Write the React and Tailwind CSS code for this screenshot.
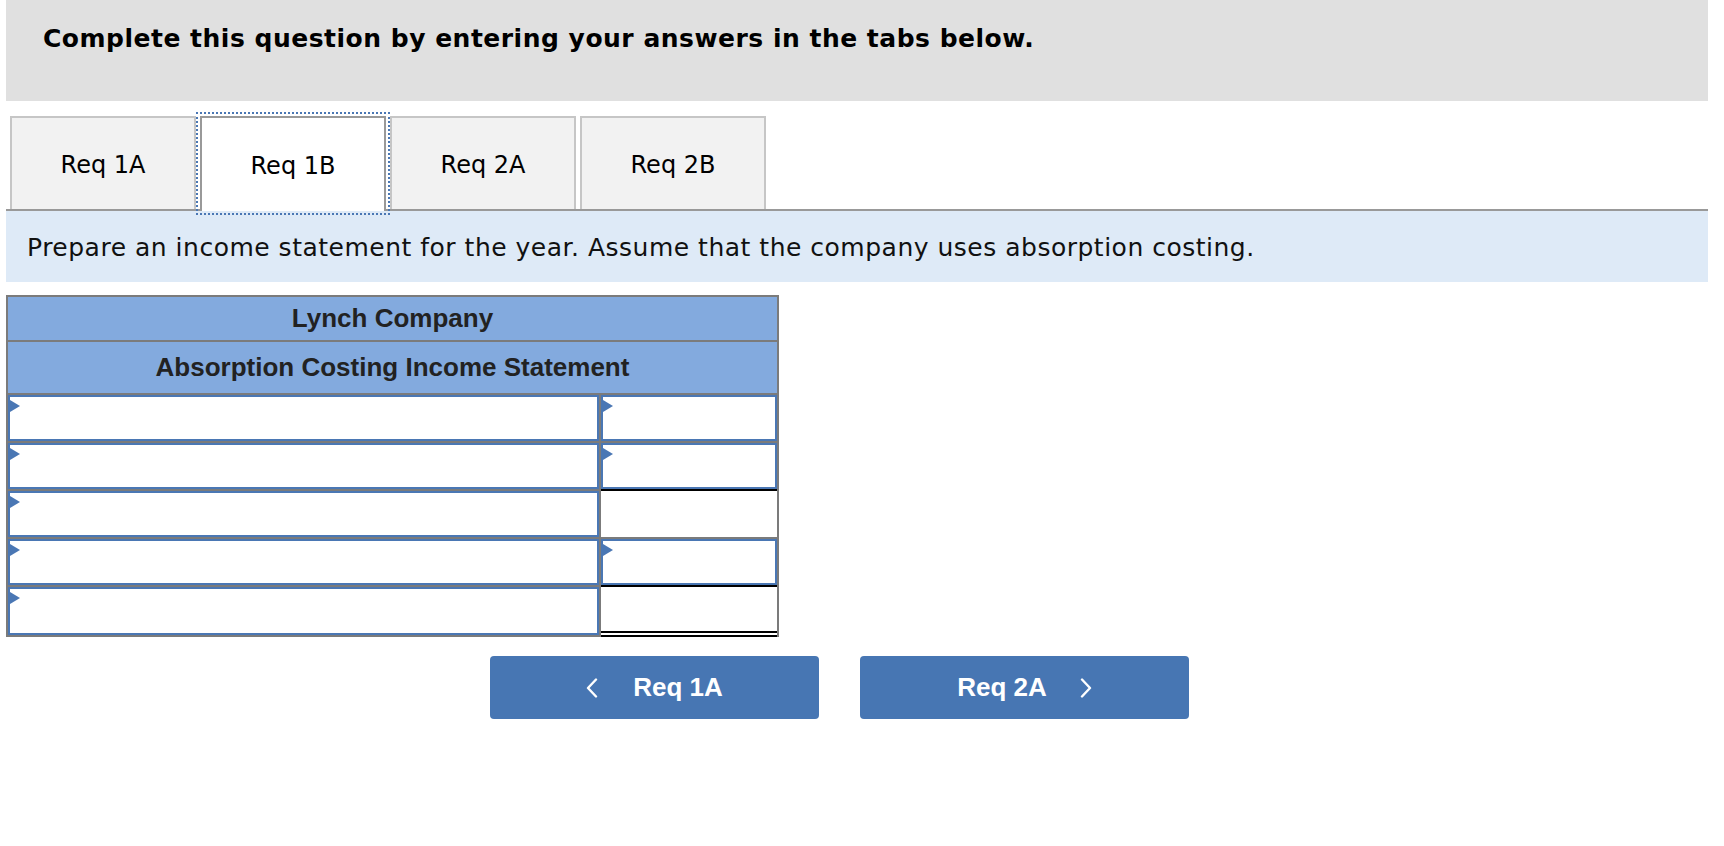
import React from 'react';

const tabs = ['Req 1A', 'Req 1B', 'Req 2A', 'Req 2B'];

// right column: 'input' = blue dropdown box, 'total' = plain cell
const rows = [
  { right: 'input', line: 'gray' },
  { right: 'input', line: 'black' },
  { right: 'total', line: 'gray' },
  { right: 'input', line: 'black' },
  { right: 'total', line: 'double' },
];

const Marker = () => (
  <span className="absolute left-0 top-[3px] w-0 h-0 border-y-[6px] border-y-transparent border-l-[10px] border-l-[#4a77b4]" />
);

const InputBox = () => (
  <div className="relative h-full w-full border-2 border-[#4a77b4] bg-white">
    <Marker />
  </div>
);

const Chevron = ({ dir }) => (
  <svg width="12" height="20" viewBox="0 0 12 20" fill="none" stroke="white" strokeWidth="2.4" strokeLinecap="round" strokeLinejoin="round">
    {dir === 'left' ? <polyline points="10,1.5 2,10 10,18.5" /> : <polyline points="2,1.5 10,10 2,18.5" />}
  </svg>
);

export default function App() {
  return (
    <div className="min-h-screen bg-white">
      <div className="ml-[6px] w-[1702px]">
        {/* Header */}
        <div className="h-[101px] bg-[#e0e0e0] pl-[37px] pt-[25px]">
          <h1 className="text-[25px] leading-[28px] tracking-[0.5px] font-bold text-black" style={{ fontFamily: '"DejaVu Sans", Verdana, sans-serif' }}>
            Complete this question by entering your answers in the tabs below.
          </h1>
        </div>

        {/* Tabs */}
        <div className="mt-[15px] flex items-end gap-[4px] pl-[4px] border-b-2 border-[#999999]" style={{ fontFamily: '"DejaVu Sans", Verdana, sans-serif' }}>
          {tabs.map((t) => {
            const active = t === 'Req 1B';
            return (
              <div
                key={t}
                className={`w-[186px] h-[93px] pt-[3px] flex items-center justify-center text-[24px] text-black border-2 border-b-0 ${
                  active
                    ? 'relative z-10 -mb-[2px] h-[95px] bg-white border-[#999999] outline-2 outline-dotted outline-offset-[2px] outline-[#4a77b4]'
                    : 'bg-[#f2f2f2] border-[#c6c6c6]'
                }`}
              >
                {t}
              </div>
            );
          })}
        </div>

        {/* Instructions */}
        <div className="h-[71px] bg-[#deeaf7] pl-[21px] pt-[3px] flex items-center text-[25px] tracking-[0.5px] text-[#111]" style={{ fontFamily: '"DejaVu Sans", Verdana, sans-serif' }}>
          Prepare an income statement for the year. Assume that the company uses absorption costing.
        </div>

        {/* Statement table */}
        <div className="mt-[13px] w-[773px] border-2 border-[#7b7b7b]" style={{ fontFamily: '"Liberation Sans", Arial, sans-serif' }}>
          <div className="h-[45px] bg-[#83aade] flex items-center justify-center text-[26px] font-bold text-[#222] border-b-2 border-[#7b7b7b]">
            Lynch Company
          </div>
          <div className="h-[53px] bg-[#83aade] flex items-center justify-center text-[26px] font-bold text-[#222] border-b-2 border-[#7b7b7b]">
            Absorption Costing Income Statement
          </div>
          {rows.map((r, i) => (
            <div key={i} className={`flex h-[48px] ${i < rows.length - 1 ? 'border-b-2 border-[#7b7b7b]' : ''}`}>
              <div className="w-[591px] h-full">
                <InputBox />
              </div>
              <div className="w-[2px] bg-[#7b7b7b]" />
              <div className="flex-1 h-full flex flex-col">
                <div className="flex-1 min-h-0">
                  {r.right === 'input' ? <InputBox /> : <div className="h-full bg-white" />}
                </div>
                {r.line === 'black' && <div className="h-[2px] bg-black -mb-[2px] relative z-10" />}
                {r.line === 'double' && <div className="h-[6px] border-y-2 border-black bg-white -mb-[2px] relative z-10" />}
              </div>
            </div>
          ))}
        </div>

        {/* Navigation buttons */}
        <div className="mt-[19px] ml-[484px] flex gap-[41px]" style={{ fontFamily: '"Liberation Sans", Arial, sans-serif' }}>
          <button className="w-[329px] h-[63px] rounded-[4px] bg-[#4776b3] text-white text-[26px] font-bold flex items-center justify-center gap-[35px]">
            <Chevron dir="left" />
            <span>Req 1A</span>
          </button>
          <button className="w-[329px] h-[63px] rounded-[4px] bg-[#4776b3] text-white text-[26px] font-bold flex items-center justify-center gap-[33px]">
            <span>Req 2A</span>
            <Chevron dir="right" />
          </button>
        </div>
      </div>
    </div>
  );
}
